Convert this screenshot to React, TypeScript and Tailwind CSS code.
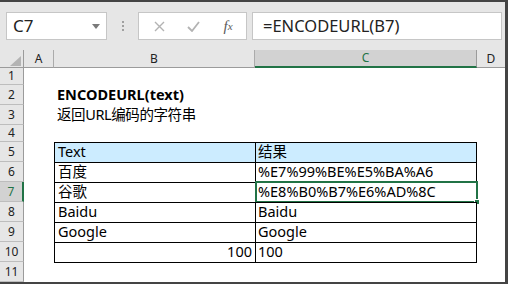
import type { ReactNode } from "react";

type Row = {
  n: number;
  h: number;
  b?: ReactNode;
  c?: ReactNode;
  table?: boolean;
  head?: boolean;
  right?: boolean;
  sel?: boolean;
  closeTop?: boolean;
};

const rows: Row[] = [
  { n: 1, h: 17 },
  { n: 2, h: 20, b: <span className="font-bold">ENCODEURL(text)</span> },
  { n: 3, h: 20, b: <span className="tracking-[-0.4px]">返回URL编码的字符串</span> },
  { n: 4, h: 17 },
  { n: 5, h: 20, b: "Text", c: "结果", table: true, head: true },
  { n: 6, h: 20, b: "百度", c: "%E7%99%BE%E5%BA%A6", table: true },
  { n: 7, h: 20, b: "谷歌", c: "%E8%B0%B7%E6%AD%8C", table: true, sel: true },
  { n: 8, h: 20, b: "Baidu", c: "Baidu", table: true },
  { n: 9, h: 20, b: "Google", c: "Google", table: true },
  { n: 10, h: 20, b: "100", c: "100", table: true, right: true },
  { n: 11, h: 20, closeTop: true },
];

const Toolbar = () => (
  <div className="flex h-[48px] shrink-0 items-start pl-[6px] pt-[10px]">
    <div className="flex h-[28px] w-[101px] items-center justify-between border border-[#c6c6c6] bg-white pl-[6px] pr-[6px]">
      <span className="text-[17px] text-[#222]">C7</span>
      <svg width="8" height="5" viewBox="0 0 8 5">
        <path d="M0 0h8L4 5z" fill="#7a7a7a" />
      </svg>
    </div>
    <div className="flex w-[31px] flex-col items-center gap-[2px] pt-[9px]">
      <div className="h-[2px] w-[2px] bg-[#a0a0a0]" />
      <div className="h-[2px] w-[2px] bg-[#a0a0a0]" />
      <div className="h-[2px] w-[2px] bg-[#a0a0a0]" />
    </div>
    <div className="flex h-[28px] w-[109px] items-center border border-[#c6c6c6] bg-white">
      <div className="flex w-[36px] justify-center pl-[4px]">
        <svg width="11" height="11" viewBox="0 0 11 11">
          <path d="M1 1l9 9M10 1l-9 9" stroke="#b3b3b3" strokeWidth="1.4" />
        </svg>
      </div>
      <div className="flex w-[36px] justify-center">
        <svg width="13" height="11" viewBox="0 0 13 11">
          <path d="M1 6l4 4 7-9" stroke="#b3b3b3" strokeWidth="1.8" fill="none" />
        </svg>
      </div>
      <div className="flex w-[34px] justify-center font-['Liberation_Serif'] italic text-[#5a5a5a]">
        <span className="text-[15px]">f</span>
        <span className="pt-[3px] text-[11px]">x</span>
      </div>
    </div>
    <div className="ml-[5px] flex h-[28px] w-[250px] items-center border border-[#c6c6c6] bg-white pl-[10px]">
      <span className="text-[16.5px] text-[#222]">=ENCODEURL(B7)</span>
    </div>
  </div>
);

const HeaderRow = () => (
  <div className="flex h-[18px] shrink-0 text-[12px] text-[#222]">
    <div className="relative w-[24px] border-r border-b border-[#9b9b9b]">
      <svg className="absolute right-[2px] bottom-[1px]" width="11" height="10" viewBox="0 0 11 10">
        <path d="M11 0v10H0z" fill="#b4b4b4" />
      </svg>
    </div>
    <div className="flex w-[30px] items-center justify-center border-r border-b border-[#ababab] border-b-[#9b9b9b]">A</div>
    <div className="flex w-[201px] items-center justify-center border-r border-b border-[#ababab] border-b-[#9b9b9b]">B</div>
    <div className="flex w-[222px] items-center justify-center border-r border-[#9b9b9b] border-b-2 border-b-[#217346] bg-[#d2d2d2] text-[#217346]">
      C
    </div>
    <div className="flex w-[28px] items-center justify-center border-b border-[#9b9b9b]">D</div>
  </div>
);

const SheetRow = ({ row }: { row: Row }) => {
  const line = row.table || row.closeTop;
  return (
    <div className="flex shrink-0" style={{ height: row.h }}>
      <div
        className={
          row.sel
            ? "flex w-[24px] items-center justify-center border-b border-b-[#bdbdbd] border-r-2 border-r-[#217346] bg-[#d2d2d2] text-[12px] text-[#217346]"
            : "flex w-[24px] items-center justify-center border-b border-r border-b-[#bdbdbd] border-r-[#9b9b9b] bg-[#e6e6e6] text-[12px] text-[#222]"
        }
      >
        {row.n}
      </div>
      <div className="w-[30px] bg-white" />
      <div
        className={
          "flex w-[201px] items-end pb-[2px] pl-[3px] pr-[3px] leading-[18px] " +
          (row.table ? "border-t border-l border-black " : line ? "border-t border-black " : "") +
          (row.head ? "bg-[#ccecff] " : "bg-white ") +
          (row.right ? "justify-end" : "")
        }
      >
        {row.b}
      </div>
      <div
        className={
          "relative flex w-[222px] items-end pb-[2px] pl-[2px] leading-[18px] " +
          (row.table ? "border-t border-l border-r border-black " : line ? "border-t border-black " : "") +
          (row.head ? "bg-[#ccecff]" : "bg-white")
        }
      >
        {row.c}
        {row.sel && (
          <div className="absolute -top-[2px] -left-[1px] -right-[2px] -bottom-[1px] border-2 border-[#217346]">
            <div className="absolute -right-[4px] -bottom-[4px] h-[6px] w-[6px] border border-white bg-[#217346]" />
          </div>
        )}
      </div>
      <div className="w-[28px] bg-white" />
    </div>
  );
};

export default function App() {
  return (
    <div className="flex h-[284px] w-[508px] flex-col overflow-hidden border-t-2 border-r-[3px] border-b-2 border-[#444] bg-[#e6e6e6] font-['Noto_Sans','Noto_Sans_CJK_SC',sans-serif] text-[14.5px] text-black">
      <Toolbar />
      <HeaderRow />
      {rows.map((r) => (
        <SheetRow key={r.n} row={r} />
      ))}
    </div>
  );
}
